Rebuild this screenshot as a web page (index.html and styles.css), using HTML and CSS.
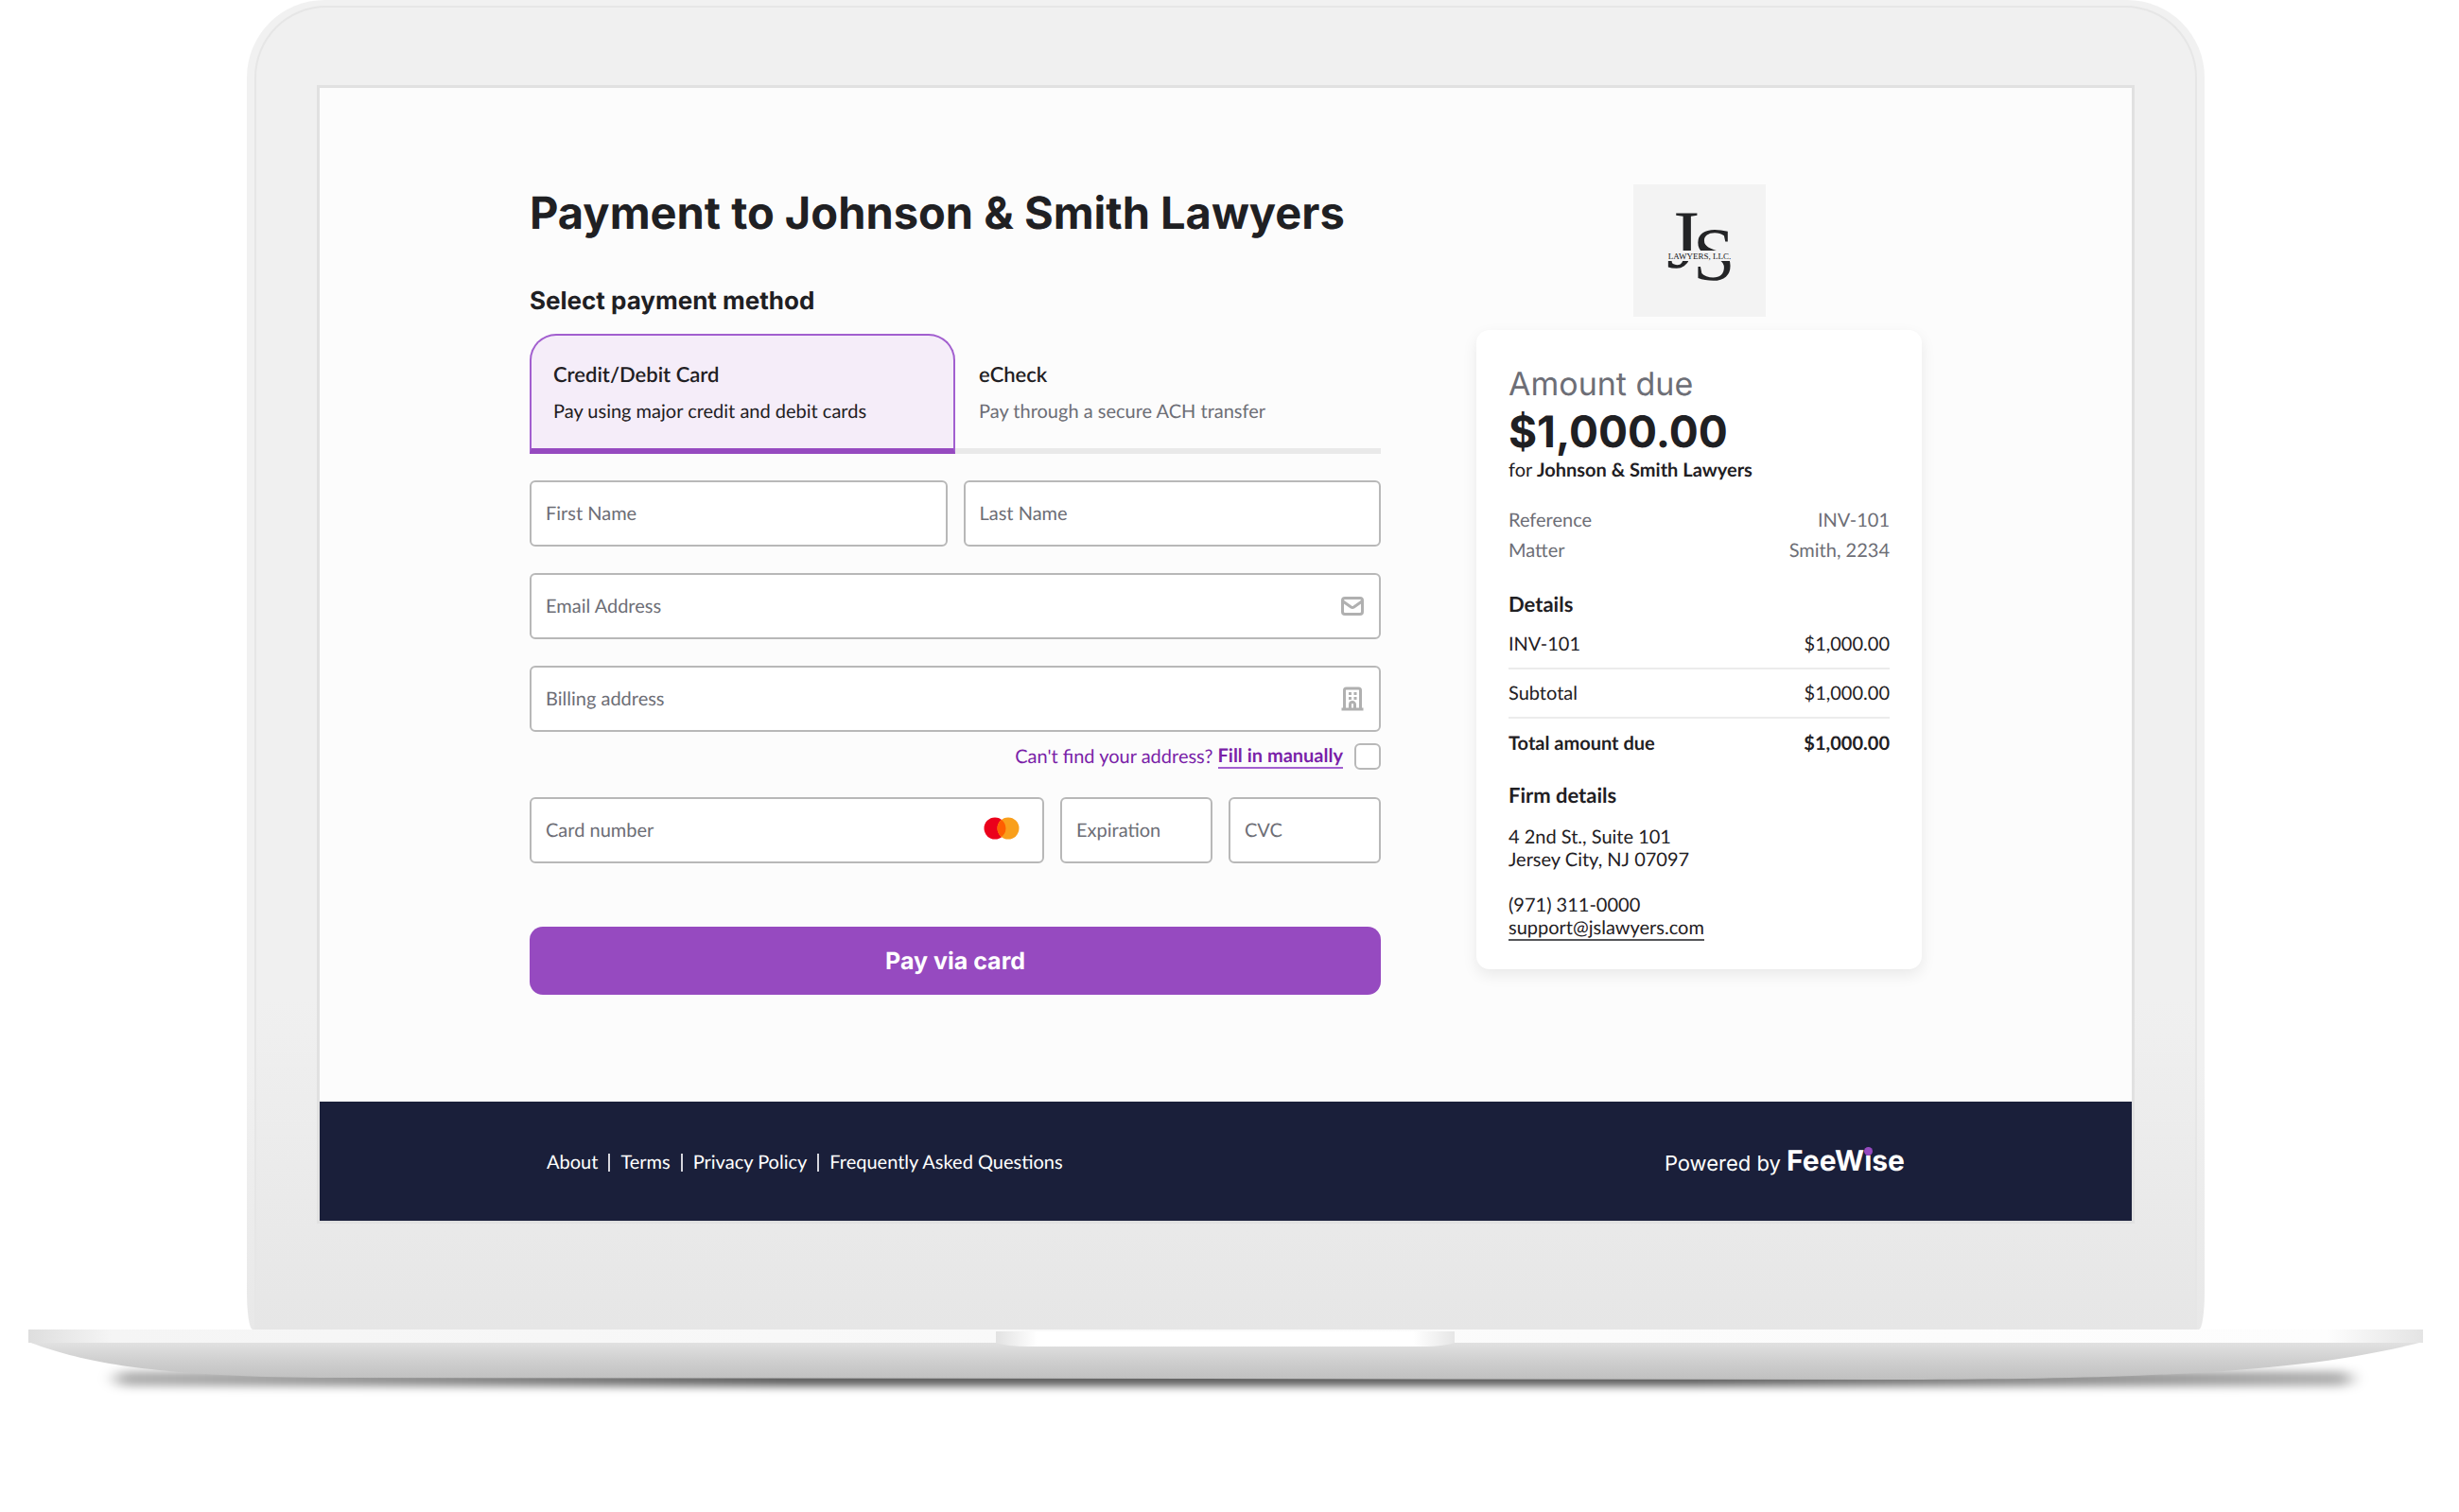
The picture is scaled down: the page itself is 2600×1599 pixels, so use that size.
FILE: index.html
```html
<!DOCTYPE html>
<html lang="en">
<head>
<meta charset="utf-8">
<meta name="viewport" content="width=device-width, initial-scale=1">
<title>Payment to Johnson &amp; Smith Lawyers</title>
<link rel="stylesheet" href="styles.css">
</head>
<body>
<div class="lid">
  <div class="bezel">
    <div class="screen">
      <main class="content">
        <form class="payment">
          <h1 class="title">Payment to Johnson &amp; Smith Lawyers</h1>
          <h2 class="subtitle">Select payment method</h2>
          <div class="tabs" role="tablist">
            <button class="tab tab--active" type="button" role="tab" aria-selected="true">
              <span class="tab-name">Credit/Debit Card</span>
              <span class="tab-note">Pay using major credit and debit cards</span>
            </button>
            <button class="tab" type="button" role="tab" aria-selected="false">
              <span class="tab-name">eCheck</span>
              <span class="tab-note">Pay through a secure ACH transfer</span>
            </button>
          </div>
          <div class="row row--names">
            <label class="field"><input class="input" type="text" placeholder="First Name" aria-label="First Name"></label>
            <label class="field"><input class="input" type="text" placeholder="Last Name" aria-label="Last Name"></label>
          </div>
          <label class="field">
            <input class="input" type="email" placeholder="Email Address" aria-label="Email Address">
            <svg class="icon" viewBox="0 0 26 26" aria-hidden="true"><rect x="2.500" y="4.500" width="21" height="17" rx="2.500"/><path d="M3 8l8.500 6q1.500 1 3 0L23 8"/></svg>
          </label>
          <div class="billing">
            <label class="field">
              <input class="input" type="text" placeholder="Billing address" aria-label="Billing address">
              <svg class="icon" viewBox="0 0 26 26" aria-hidden="true"><path d="M1.500 24h23M4.500 24V4a2 2 0 0 1 2-2h13a2 2 0 0 1 2 2v20M10.500 24v-5a2.500 2.500 0 0 1 5 0v5M9 7.500h3M14.500 7.500h3M9 12.500h3M14.500 12.500h3"/></svg>
            </label>
            <div class="manual">
              <label for="manual">Can't find your address?</label>
              <a class="manual-link" href="#manual">Fill in manually</a>
              <input class="check" id="manual" type="checkbox">
            </div>
          </div>
          <div class="row row--card">
            <label class="field">
              <input class="input" type="text" placeholder="Card number" aria-label="Card number">
              <svg class="brand" viewBox="0 0 38 28" aria-hidden="true"><circle cx="12" cy="12" r="11.500" fill="#eb001b"/><circle cx="26" cy="12" r="11.500" fill="#f99f1b"/><path d="M19 2.900a11.500 11.500 0 0 1 0 18.200a11.500 11.500 0 0 1 0-18.200z" fill="#ff5f00"/></svg>
            </label>
            <label class="field"><input class="input" type="text" placeholder="Expiration" aria-label="Expiration"></label>
            <label class="field"><input class="input" type="text" placeholder="CVC" aria-label="CVC"></label>
          </div>
          <button class="pay" type="submit">Pay via card</button>
        </form>

        <aside class="side">
          <svg class="firm-logo" viewBox="0 0 140 140" role="img" aria-label="JS Lawyers, LLC.">
            <rect width="140" height="140" fill="#f3f3f3"/>
            <g class="monogram"><text x="35" y="88" font-size="88">J</text><text x="63" y="101" font-size="80">S</text></g>
            <rect x="34" y="70" width="74" height="11" fill="#f3f3f3"/>
            <text class="logo-label" x="70" y="79" text-anchor="middle">LAWYERS, LLC.</text>
          </svg>
          <section class="summary">
            <p class="due">Amount due</p>
            <p class="amount">$1,000.00</p>
            <p class="for">for <strong>Johnson &amp; Smith Lawyers</strong></p>
            <dl class="refs">
              <div class="ref"><dt>Reference</dt><dd>INV-101</dd></div>
              <div class="ref"><dt>Matter</dt><dd>Smith, 2234</dd></div>
            </dl>
            <h3 class="heading">Details</h3>
            <table class="lines">
              <tr><td>INV-101</td><td>$1,000.00</td></tr>
              <tr><td>Subtotal</td><td>$1,000.00</td></tr>
              <tr class="total"><td>Total amount due</td><td>$1,000.00</td></tr>
            </table>
            <h3 class="heading">Firm details</h3>
            <address class="firm">
              <p>4 2nd St., Suite 101<br>Jersey City, NJ 07097</p>
              <p>(971) 311-0000<br><a class="mail" href="mailto:support@jslawyers.com">support@jslawyers.com</a></p>
            </address>
          </section>
        </aside>
      </main>
      <footer class="footer">
        <nav class="links">
          <a href="#about">About</a><span class="bar"></span><a href="#terms">Terms</a><span class="bar"></span><a href="#privacy">Privacy Policy</a><span class="bar"></span><a href="#faq">Frequently Asked Questions</a>
        </nav>
        <p class="powered">Powered by <strong class="feewise">FeeW<span class="dot">i</span>se</strong></p>
      </footer>
    </div>
  </div>
</div>
<svg class="base" viewBox="0 0 2600 193" preserveAspectRatio="none" aria-hidden="true">
  <defs>
    <linearGradient id="edge"><stop offset="0" stop-color="#dedede"/><stop offset=".035" stop-color="#f5f5f5"/><stop offset=".5" stop-color="#fafafa"/><stop offset=".96" stop-color="#fdfdfd"/><stop offset="1" stop-color="#e4e4e4"/></linearGradient>
    <linearGradient id="belly" x2="0" y2="1"><stop offset="0" stop-color="#e2e2e2"/><stop offset=".5" stop-color="#cfcfcf"/><stop offset="1" stop-color="#c0c0c0"/></linearGradient>
    <linearGradient id="notch"><stop offset="0" stop-color="#e2e2e2"/><stop offset=".09" stop-color="#fff"/><stop offset=".91" stop-color="#fff"/><stop offset="1" stop-color="#e6e6e6"/></linearGradient>
    <linearGradient id="shade"><stop offset="0" stop-color="#000" stop-opacity=".3"/><stop offset=".3" stop-color="#000" stop-opacity=".65"/><stop offset=".7" stop-color="#000" stop-opacity=".65"/><stop offset="1" stop-color="#000" stop-opacity=".3"/></linearGradient>
    <filter id="soft" x="-5%" y="-100%" width="110%" height="300%"><feGaussianBlur stdDeviation="9 5"/></filter>
  </defs>
  <rect x="122" y="44" width="2364" height="16" rx="8" fill="url(#shade)" filter="url(#soft)"/>
  <path d="M30 13C90 36 170 51 370 51L2000 53C2300 53 2450 42 2562 13z" fill="url(#belly)"/>
  <rect x="30" y="0" width="2532" height="14" fill="url(#edge)"/>
  <path d="M1053 2h485v12q-12 4-35 4h-415q-23 0-35-4z" fill="url(#notch)"/>
</svg>
</body>
</html>
```
FILE: styles.css
```css
* { box-sizing: border-box; }

body {
  margin: 0;
  background: #fff;
  color: #1f2023;
  font: 20px/24px Lato, "Open Sans", sans-serif;
  text-rendering: geometricPrecision;
}

h1, h2, h3, p, dl, dd { margin: 0; }

button, input { font: inherit; color: inherit; text-rendering: inherit; }

/* Laptop */
.lid {
  margin: 0 269px 0 261px;
  padding: 6px 8px 0;
  border-radius: 82px 82px 6px 6px / 82px 82px 40px 40px;
  background: linear-gradient(#f1f1f1 80%, #e8e8e8);
  overflow: hidden;
}

.bezel {
  padding: 82px 64px 112px;
  border: 2px solid #e6e6e6;
  border-bottom: 0;
  border-radius: 76px 76px 0 0;
  background: linear-gradient(#f0f0f0 75%, #e6e6e6);
}

.screen {
  border: 3px solid #e1e1e1;
  background: #fcfcfc;
}

.base {
  display: block;
  width: 100%;
  height: 193px;
}

/* Page */
.content {
  display: grid;
  grid-template-columns: minmax(0, 1fr) 471px;
  gap: 101px;
  padding: 102px 222px 113px;
}

.title, .subtitle, .pay, .due, .amount, .powered {
  font-family: Inter, "Open Sans", sans-serif;
}

.title { font-size: 47px; line-height: 62px; font-weight: 700; }

.subtitle { margin: 46px 0 18px; font-size: 26px; line-height: 32px; font-weight: 700; }

.tabs {
  display: grid;
  grid-template-columns: 1fr 1fr;
  margin-bottom: 28px;
}

.tab {
  display: flex;
  flex-direction: column;
  gap: 15px;
  height: 127px;
  padding: 31px 25px 0;
  border: 0;
  border-bottom: 6px solid #e9e9e9;
  background: none;
  text-align: left;
}

.tab-name { font-size: 22px; font-weight: 600; }
.tab-note { color: #6d6e76; }

.tab--active {
  padding: 29px 23px 0;
  border: 2px solid #a25fcf;
  border-bottom: 6px solid #964ac0;
  border-radius: 28px 28px 0 0;
  background: #f5edf9;
}

.tab--active .tab-note { color: inherit; }

.row { display: grid; gap: 17px; }
.row--names { grid-template-columns: 1fr 1fr; margin-bottom: 28px; }
.row--card { grid-template-columns: minmax(0, 1fr) 161px 161px; }

.field {
  display: flex;
  align-items: center;
  height: 70px;
  padding: 0 15px;
  border: 2px solid #b8b8b8;
  border-radius: 6px;
  background: #fff;
}

.input {
  flex: 1;
  min-width: 0;
  padding: 0;
  border: 0;
  outline: 0;
  background: none;
}

.input::placeholder { color: #6d6e76; opacity: 1; }

.icon {
  width: 26px;
  height: 26px;
  fill: none;
  stroke: #b0b0b0;
  stroke-width: 3;
}

.brand { width: 38px; height: 28px; margin-right: 9px; }

.billing { margin: 28px 0 29px; }

.manual {
  display: flex;
  justify-content: flex-end;
  align-items: center;
  gap: 5px;
  margin-top: 12px;
  color: #7a1fa8;
}

.manual-link {
  border-bottom: 2px solid #a25fcf;
  color: inherit;
  font-weight: 700;
  text-decoration: none;
}

.check {
  appearance: none;
  width: 28px;
  height: 28px;
  margin: 0 0 0 7px;
  border: 2px solid #b8b8b8;
  border-radius: 6px;
  background: #fff;
}

.pay {
  width: 100%;
  height: 72px;
  margin-top: 67px;
  padding: 2px 0 0;
  border: 0;
  border-radius: 14px;
  background: #964ac0;
  color: #fff;
  font-size: 25px;
  font-weight: 700;
}

/* Summary */
.side { display: flex; flex-direction: column; gap: 14px; }

.firm-logo { width: 140px; height: 140px; align-self: center; }

.monogram, .logo-label { fill: #232426; font-family: "Liberation Serif", serif; }
.logo-label { font-size: 9px; }

.summary {
  padding: 36px 34px 32px;
  border-radius: 14px;
  background: #fff;
  box-shadow: 0 6px 16px rgba(0, 0, 0, .08);
}

.due { color: #6d6e76; font-size: 34px; line-height: 44px; }
.amount { font-size: 46px; line-height: 56px; font-weight: 700; }
.for strong { font-weight: 700; }

.refs { margin: 25px 0 29px; }
.ref { display: flex; justify-content: space-between; line-height: 32px; color: #6d6e76; }

.heading { font-size: 22px; font-weight: 700; }

.lines { width: 100%; margin: 4px 0 18px; border-collapse: collapse; }
.lines td { height: 52px; padding: 0; border-bottom: 2px solid #ececec; }
.lines td:last-child { text-align: right; }
.lines .total td { border-bottom: 0; font-weight: 700; }

.firm { display: grid; gap: 24px; margin-top: 20px; font-style: normal; }
.mail { border-bottom: 2px solid #55565a; color: inherit; text-decoration: none; }

/* Footer */
.footer {
  display: flex;
  justify-content: space-between;
  align-items: center;
  height: 126px;
  padding: 2px 240px 0;
  background: #1a1f3a;
  color: #fff;
}

.links { display: flex; align-items: center; gap: 11px; }
.links a { color: inherit; text-decoration: none; }
.bar { width: 2px; height: 19px; background: #d5d5dc; }

.powered { font-size: 22px; }
.feewise { font-size: 30px; font-weight: 700; }
.dot { position: relative; }
.dot::before {
  position: absolute;
  top: 3px;
  left: 0;
  width: 9px;
  height: 9px;
  border-radius: 50%;
  background: #964ac0;
  content: "";
}
```
